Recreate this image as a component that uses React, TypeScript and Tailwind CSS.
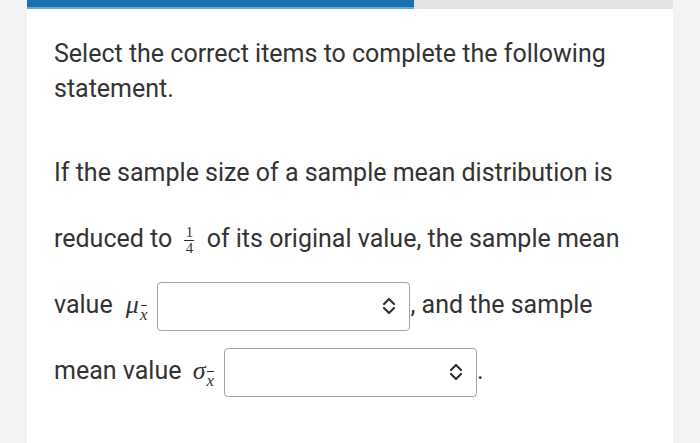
const Chevrons = () => (
  <svg width="14" height="18" viewBox="0 0 14 18" fill="none" stroke="#333" strokeWidth="2.2" strokeLinecap="round" strokeLinejoin="round">
    <path d="M2 7 L7 2 L12 7" />
    <path d="M2 11 L7 16 L12 11" />
  </svg>
);

function SelectBox() {
  return (
    <span className="inline-flex h-[49px] w-[253px] items-center justify-end rounded-[4px] border-[1.5px] border-[#a3a3a3] bg-white pr-[13px] align-middle">
      <Chevrons />
    </span>
  );
}

function SubX() {
  return (
    <span className="relative ml-[1px] inline-block text-[17px] italic leading-none align-[-7px]">
      <span className="absolute left-[1px] right-[0px] top-[-1px] h-[1px] bg-[#333]" />
      x
    </span>
  );
}

function App() {
  return (
    <div className="min-h-[443px] w-full bg-[#f3f3f3] font-['Roboto',sans-serif] text-[#333]">
      <div className="mx-[27px] min-h-[443px] bg-white">
        <div className="flex h-[9px]">
          <div className="w-[387px] border-b-[2px] border-[#5aaee0] bg-[#1b70b3]" />
          <div className="flex-1 bg-[#e3e3e3]" />
        </div>
        <div className="px-[27px] pt-[27px]">
          <p className="text-[25px] leading-[35px]">
            Select the correct items to complete the following statement.
          </p>
          <div className="mt-[34px] text-[25px] leading-[66px]">
            <div>If the sample size of a sample mean distribution is</div>
            <div>
              reduced to{" "}
              <span className="mx-[6px] inline-flex flex-col items-center align-middle font-['Liberation_Serif',serif] text-[15px] leading-[15px]">
                <span>1</span>
                <span className="h-[1px] w-[10px] bg-[#333]" />
                <span>4</span>
              </span>{" "}
              of its original value, the sample mean
            </div>
            <div>
              value{" "}
              <span className="ml-[7px] mr-[10px] font-['Liberation_Serif',serif] text-[26px] italic">
                μ<SubX />
              </span>
              <SelectBox />
              , and the sample
            </div>
            <div>
              mean value{" "}
              <span className="ml-[5px] mr-[10px] font-['Liberation_Serif',serif] text-[26px] italic">
                σ<SubX />
              </span>
              <SelectBox />.
            </div>
          </div>
        </div>
      </div>
    </div>
  );
}

export default App;
